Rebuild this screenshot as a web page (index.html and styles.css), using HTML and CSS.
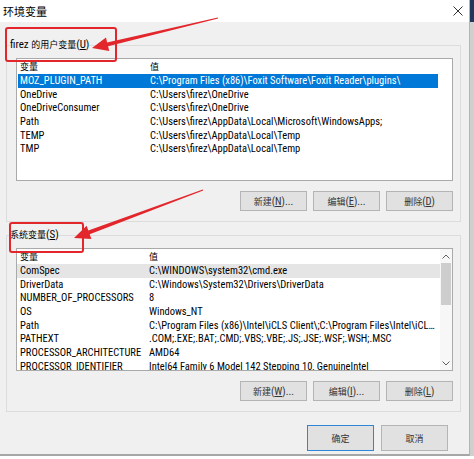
FILE: index.html
```
<!DOCTYPE html>
<html lang="zh-CN">
<head>
<meta charset="utf-8">
<title>环境变量</title>
<link rel="stylesheet" href="styles.css">
</head>
<body>
<div class="screen">
  <div class="window">
    <div class="titlebar">
      <span class="title">环境变量</span>
      <svg class="close" width="10" height="10" viewBox="0 0 10 10"><path d="M0.5 0.5L9.5 9.5M9.5 0.5L0.5 9.5" stroke="#333" stroke-width="1" fill="none"/></svg>
    </div>

    <fieldset class="group group-user">
      <legend>firez <span class="zh">的用户变量</span>(<u>U</u>)</legend>
      <div class="list">
        <div class="rows">
          <div class="row head"><span class="c1 zh">变量</span><span class="c2 zh">值</span></div>
          <div class="row sel"><span class="c1">MOZ_PLUGIN_PATH</span><span class="c2">C:\Program Files (x86)\Foxit Software\Foxit Reader\plugins\</span></div>
          <div class="row"><span class="c1">OneDrive</span><span class="c2">C:\Users\firez\OneDrive</span></div>
          <div class="row"><span class="c1">OneDriveConsumer</span><span class="c2">C:\Users\firez\OneDrive</span></div>
          <div class="row"><span class="c1">Path</span><span class="c2">C:\Users\firez\AppData\Local\Microsoft\WindowsApps;</span></div>
          <div class="row"><span class="c1">TEMP</span><span class="c2">C:\Users\firez\AppData\Local\Temp</span></div>
          <div class="row"><span class="c1">TMP</span><span class="c2">C:\Users\firez\AppData\Local\Temp</span></div>
        </div>
      </div>
      <div class="btns">
        <button class="btn"><span class="zh">新建</span>(<u>N</u>)...</button>
        <button class="btn"><span class="zh">编辑</span>(<u>E</u>)...</button>
        <button class="btn"><span class="zh">删除</span>(<u>D</u>)</button>
      </div>
    </fieldset>

    <fieldset class="group group-sys">
      <legend><span class="zh">系统变量</span>(<u>S</u>)</legend>
      <div class="list list-scroll">
        <div class="rows">
          <div class="row head"><span class="c1 zh">变量</span><span class="c2 zh">值</span></div>
          <div class="row hover"><span class="c1">ComSpec</span><span class="c2">C:\WINDOWS\system32\cmd.exe</span></div>
          <div class="row"><span class="c1">DriverData</span><span class="c2">C:\Windows\System32\Drivers\DriverData</span></div>
          <div class="row"><span class="c1">NUMBER_OF_PROCESSORS</span><span class="c2">8</span></div>
          <div class="row"><span class="c1">OS</span><span class="c2">Windows_NT</span></div>
          <div class="row"><span class="c1">Path</span><span class="c2">C:\Program Files (x86)\Intel\iCLS Client\;C:\Program Files\Intel\iCLS Client\;C:\WINDOWS\system32</span></div>
          <div class="row"><span class="c1">PATHEXT</span><span class="c2">.COM;.EXE;.BAT;.CMD;.VBS;.VBE;.JS;.JSE;.WSF;.WSH;.MSC</span></div>
          <div class="row"><span class="c1">PROCESSOR_ARCHITECTURE</span><span class="c2">AMD64</span></div>
          <div class="row"><span class="c1">PROCESSOR_IDENTIFIER</span><span class="c2">Intel64 Family 6 Model 142 Stepping 10, GenuineIntel</span></div>
        </div>
        <div class="scrollbar">
          <div class="sb-arrow"><svg width="8" height="5" viewBox="0 0 8 5"><path d="M0.5 4.5L4 1L7.5 4.5" stroke="#606060" fill="none"/></svg></div>
          <div class="sb-track"><div class="sb-thumb"></div></div>
          <div class="sb-arrow"><svg width="8" height="5" viewBox="0 0 8 5"><path d="M0.5 0.5L4 4L7.5 0.5" stroke="#606060" fill="none"/></svg></div>
        </div>
      </div>
      <div class="btns">
        <button class="btn"><span class="zh">新建</span>(<u>W</u>)...</button>
        <button class="btn"><span class="zh">编辑</span>(<u>I</u>)...</button>
        <button class="btn"><span class="zh">删除</span>(<u>L</u>)</button>
      </div>
    </fieldset>

    <div class="footer">
      <button class="btn btn-big btn-default"><span class="zh">确定</span></button>
      <button class="btn btn-big"><span class="zh">取消</span></button>
    </div>
  </div>
  <div class="edge"></div>

  <div class="mark mark-user"></div>
  <div class="mark mark-sys"></div>
  <svg class="annot" width="474" height="459" viewBox="0 0 474 459">
    <polygon fill="#e3262b" points="217.9,17.5 107.1,42.4 106.0,37.5 92,48 109.2,51.1 108.1,46.2 218.1,18.5"/>
    <polygon fill="#e3262b" points="202.8,189.5 88.3,230.5 86.6,225.8 74,238 91.4,239.0 89.7,234.3 203.2,190.5"/>
  </svg>
</div>
</body>
</html>
```

FILE: styles.css
```
html, body {
  margin: 0;
  padding: 0;
}

body {
  background: #ffffff;
  font-family: "Liberation Sans Narrow", "Roboto Condensed", "Noto Sans CJK SC", sans-serif;
  font-size: 11px;
  color: #000;
}

.zh {
  font-family: "Noto Sans CJK SC", sans-serif;
  font-size: 9px;
}

.screen {
  position: relative;
  display: flex;
  width: 474px;
  height: 459px;
  overflow: hidden;
}

.window {
  width: 469px;
  height: 454px;
  background: #f0f0f0;
  border-right: 1px solid #b4b4b4;
  border-bottom: 2px solid #a6a6a6;
  display: flex;
  flex-direction: column;
  flex: none;
}

.edge {
  width: 4px;
  height: 456px;
  flex: none;
  background: linear-gradient(#22385a 0, #22385a 22px, #cfcfcf 22px);
}

.titlebar {
  height: 22px;
  flex: none;
  background: #ffffff;
  display: flex;
  align-items: center;
  justify-content: space-between;
  padding: 0 6px 0 3px;
  font-family: "Noto Sans CJK SC", sans-serif;
  font-size: 11px;
}

.close {
  display: block;
}

.group {
  margin: 15px 8px 0 6px;
  border: 1px solid #dcdcdc;
  padding: 5px 7px 10px 9px;
  min-width: 0;
}

.group-sys {
  margin-top: 5px;
}

.group legend {
  padding: 0;
  margin-left: -6px;
  line-height: 16px;
  font-size: 11px;
}

.list {
  height: 123px;
  box-sizing: border-box;
  border: 1px solid #aaaaaa;
  background: #ffffff;
  display: flex;
  overflow: hidden;
  font-size: 10.5px;
}

.rows {
  flex: 1;
  min-width: 0;
}

.row {
  display: flex;
  height: 13.7px;
  line-height: 13.7px;
  white-space: nowrap;
  margin-left: 1px;
  width: 420px;
}

.row.head {
  height: 15px;
  line-height: 15px;
}

.list-scroll .row {
  margin-left: 0;
  width: auto;
}

.list-scroll .c1 {
  padding-left: 3px;
}

.c1 {
  width: 132px;
  flex: none;
  box-sizing: border-box;
  padding-left: 2px;
  overflow: hidden;
}

.c2 {
  flex: 1;
  min-width: 0;
  overflow: hidden;
  text-overflow: ellipsis;
}

.row.sel {
  background: #0078d7;
  color: #ffffff;
}

.row.hover {
  background: #e5e5e5;
}

.scrollbar {
  width: 12px;
  flex: none;
  display: flex;
  flex-direction: column;
  background: #f7f7f7;
}

.sb-arrow {
  height: 14px;
  display: flex;
  align-items: center;
  justify-content: center;
  flex: none;
}

.sb-arrow svg {
  display: block;
}

.sb-track {
  flex: 1;
}

.sb-thumb {
  height: 42px;
  margin: 0 1px;
  background: #cdcdcd;
}

.btns {
  display: flex;
  justify-content: flex-end;
  gap: 6px;
  margin-top: 10px;
}

.btn {
  width: 67px;
  height: 20px;
  box-sizing: border-box;
  border: 1px solid #b4b4b4;
  background: #e1e1e1;
  color: #333;
  font-family: "Liberation Sans Narrow", "Roboto Condensed", "Noto Sans CJK SC", sans-serif;
  font-size: 10.5px;
  padding: 0;
  display: flex;
  align-items: center;
  justify-content: center;
}

.footer {
  display: flex;
  justify-content: flex-end;
  gap: 7px;
  margin-top: 13px;
  padding-right: 21px;
}

.btn-big {
  height: 26px;
}

.btn-default {
  border-color: #2f86d6;
}

.mark {
  position: absolute;
  box-sizing: border-box;
  border: 2px solid #e3262b;
  border-radius: 3px;
  pointer-events: none;
}

.mark-user {
  left: 5px;
  top: 27px;
  width: 112px;
  height: 35px;
}

.mark-sys {
  left: 9px;
  top: 222px;
  width: 75px;
  height: 31px;
}

.annot {
  position: absolute;
  left: 0;
  top: 0;
  pointer-events: none;
}
```
